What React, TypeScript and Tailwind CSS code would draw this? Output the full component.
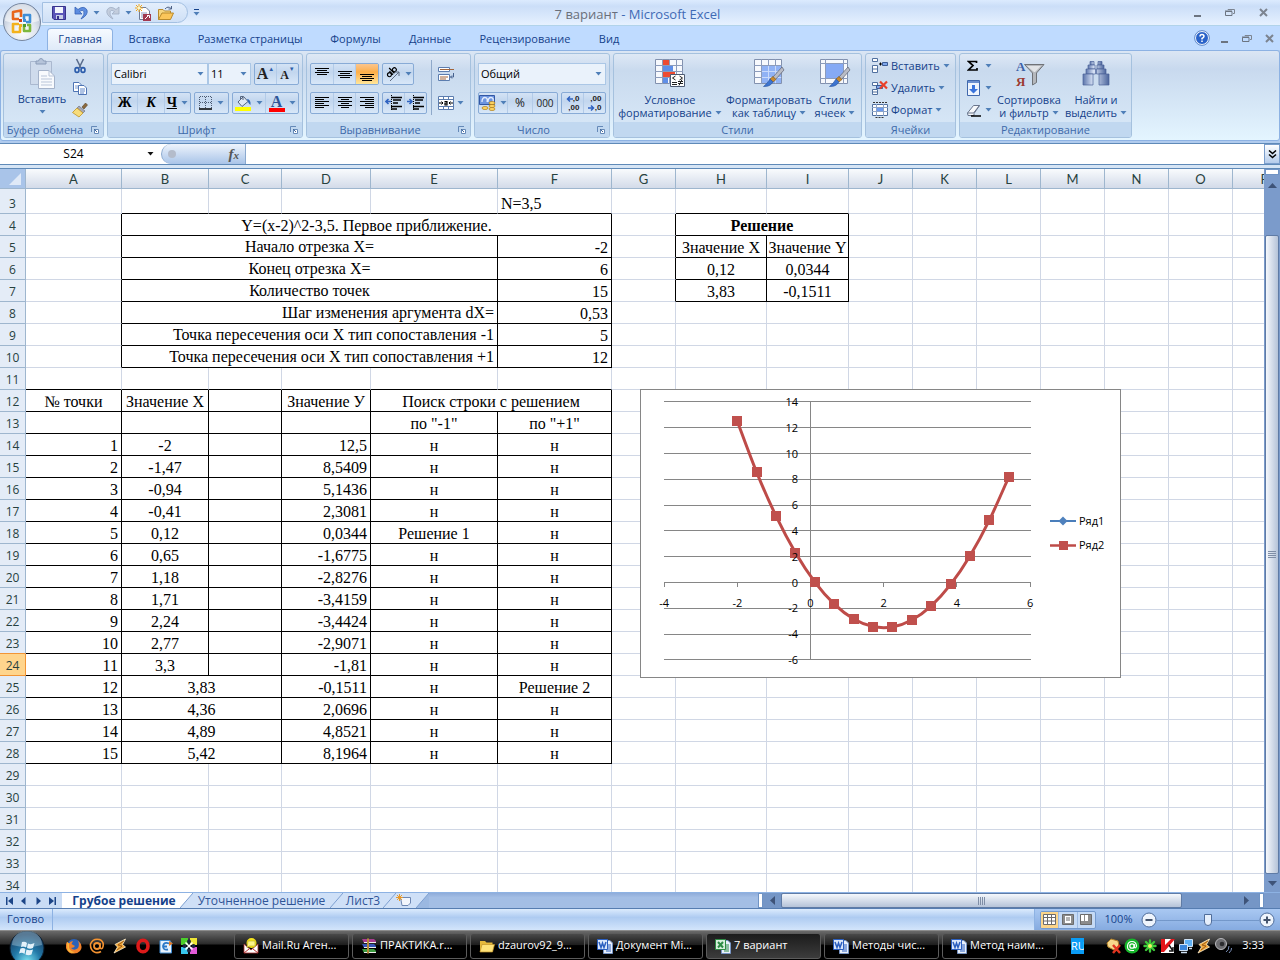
import { ReactNode } from 'react';
import clsx from 'clsx';

const COLUMNS = [
  { name: 'A', width: 96 },
  { name: 'B', width: 87 },
  { name: 'C', width: 73 },
  { name: 'D', width: 89 },
  { name: 'E', width: 127 },
  { name: 'F', width: 114 },
  { name: 'G', width: 64 },
  { name: 'H', width: 91 },
  { name: 'I', width: 82 },
  { name: 'J', width: 64 },
  { name: 'K', width: 64 },
  { name: 'L', width: 64 },
  { name: 'M', width: 64 },
  { name: 'N', width: 64 },
  { name: 'O', width: 64 },
  { name: 'P', width: 64 },
];
const FIRST_ROW = 3;
const LAST_ROW = 34;
const SELECTED_ROW = 24;

type Align = 'left' | 'center' | 'right';

interface ICell {
  text: string;
  align?: Align;
  span?: number;
  bold?: boolean;
  middle?: boolean;
}

const POINTS = [
  ['-2', '12,5'],
  ['-1,47', '8,5409'],
  ['-0,94', '5,1436'],
  ['-0,41', '2,3081'],
  ['0,12', '0,0344'],
  ['0,65', '-1,6775'],
  ['1,18', '-2,8276'],
  ['1,71', '-3,4159'],
  ['2,24', '-3,4424'],
  ['2,77', '-2,9071'],
  ['3,3', '-1,81'],
  ['3,83', '-0,1511'],
  ['4,36', '2,0696'],
  ['4,89', '4,8521'],
  ['5,42', '8,1964'],
];

function buildCells() {
  const cells: Record<string, ICell> = {
    F3: { text: 'N=3,5', align: 'left' },
    B4: { text: 'Y=(x-2)^2-3,5. Первое приближение.', span: 5 },
    B5: { text: 'Начало отрезка X=', span: 4, middle: true },
    B6: { text: 'Конец отрезка X=', span: 4, middle: true },
    B7: { text: 'Количество точек', span: 4, middle: true },
    B8: { text: 'Шаг изменения аргумента dX=', span: 4, align: 'right', middle: true },
    B9: { text: 'Точка пересечения оси X тип сопоставления -1', span: 4, align: 'right', middle: true },
    B10: { text: 'Точка пересечения оси X тип сопоставления +1', span: 4, align: 'right', middle: true },
    F5: { text: '-2', align: 'right' },
    F6: { text: '6', align: 'right' },
    F7: { text: '15', align: 'right' },
    F8: { text: '0,53', align: 'right' },
    F9: { text: '5', align: 'right' },
    F10: { text: '12', align: 'right' },
    H4: { text: 'Решение', span: 2, bold: true },
    H5: { text: 'Значение X' },
    I5: { text: 'Значение Y' },
    H6: { text: '0,12' },
    I6: { text: '0,0344' },
    H7: { text: '3,83' },
    I7: { text: '-0,1511' },
    A12: { text: '№ точки' },
    B12: { text: 'Значение X' },
    D12: { text: 'Значение У' },
    E12: { text: 'Поиск строки с решением', span: 2 },
    E13: { text: 'по "-1"' },
    F13: { text: 'по "+1"' },
  };
  POINTS.forEach(([x, y], i) => {
    const row = 14 + i;
    cells[`A${row}`] = { text: String(i + 1), align: 'right' };
    cells[`B${row}`] = { text: x, span: row >= 25 ? 2 : 1 };
    cells[`D${row}`] = { text: y, align: 'right' };
    cells[`E${row}`] = { text: row === 18 ? 'Решение 1' : 'н' };
    cells[`F${row}`] = { text: row === 25 ? 'Решение 2' : 'н' };
  });
  return cells;
}

const CELLS = buildCells();

// is the cell inside one of the framed tables
function isFramed(col: number, row: number) {
  if (row >= 4 && row <= 10 && col >= 1 && col <= 5) return true;
  if (row >= 4 && row <= 7 && (col === 7 || col === 8)) return true;
  return row >= 12 && row <= 28 && col >= 0 && col <= 5;
}

function Caret({ dark = false }: { dark?: boolean }) {
  return (
    <svg width="7" height="4" viewBox="0 0 7 4" className="shrink-0" aria-hidden="true">
      <path d="M0.5 0H6.5L3.5 3.5Z" fill={dark ? '#111' : '#4f7fb8'} />
    </svg>
  );
}

interface IIconProps {
  w?: number;
  h?: number;
  vw?: number;
  vh?: number;
  children: ReactNode;
}

function Icon({ w = 16, h = 16, vw = w, vh = h, children }: IIconProps) {
  return (
    <svg width={w} height={h} viewBox={`0 0 ${vw} ${vh}`} className="shrink-0" fill="none" aria-hidden="true">
      {children}
    </svg>
  );
}

function IconOffice() {
  return (
    <svg width="40" height="40" viewBox="0 0 40 40" aria-hidden="true">
      <defs>
        <radialGradient id="orb" cx="0.5" cy="0.75" r="0.75">
          <stop offset="0" stopColor="#ffffff" />
          <stop offset="0.5" stopColor="#dfe5ee" />
          <stop offset="1" stopColor="#a4b1c6" />
        </radialGradient>
      </defs>
      <circle cx="20" cy="20" r="18.5" fill="url(#orb)" stroke="#76869f" />
      <path d="M3 19A17 17 0 0 1 37 19Q20 24 3 19Z" fill="#fff" opacity="0.55" />
      <g strokeWidth="2.6" fill="none" strokeLinejoin="round">
        <path d="M17 17H11V10L19 8.500V15" stroke="#e8641b" />
        <path d="M22 17V13H28V20H24" stroke="#3f8fd8" />
        <path d="M17 22H11V30H18V25" stroke="#f3b21c" />
        <path d="M22 22V29H28V23H25" stroke="#7db83c" />
      </g>
      <path d="M17 17H20V20H17Z" fill="#c8411b" />
      <path d="M21 17H24V20H21Z" fill="#3f8fd8" />
      <path d="M17 22H20V25H17Z" fill="#f3b21c" />
      <path d="M21 22H24V25H21Z" fill="#4d9a2b" />
    </svg>
  );
}

function IconSave() {
  return (
    <Icon>
      <path d="M1.500 1.500H14.500V14.500H3L1.500 13Z" fill="#5a55b8" stroke="#37338c" />
      <path d="M4 2H12V8H4Z" fill="#f2f5fc" />
      <path d="M5 10H12V14H5Z" fill="#c8cfe6" />
      <path d="M6 11H8V14H6Z" fill="#37338c" />
    </Icon>
  );
}

function IconUndo({ muted = false }: { muted?: boolean }) {
  const path = 'M2 2V9H9L6.500 6.500Q9.500 4 11 6.500Q12 9.500 8 14Q15.500 10 14 5Q11 0 5 4.500Z';
  return (
    <Icon>
      <path
        d={path}
        transform={muted ? 'translate(16 0) scale(-1 1)' : undefined}
        fill={muted ? '#c3cddd' : '#5d8de0'}
        stroke={muted ? '#9fadc4' : '#3561b5'}
        strokeWidth="0.8"
      />
    </Icon>
  );
}

function IconNewForm() {
  return (
    <Icon w={18} h={18}>
      <path d="M4.500 3.500H11L14.500 7V15.500H4.500Z" fill="#fff" stroke="#6f7c96" />
      <path d="M6 9H12M6 11H10M6 13H9" stroke="#8b9cc0" />
      <path d="M8 10H16V17H8Z" fill="#a23a50" />
      <path d="M10 15L13 12M12 11.500H14.500V14" stroke="#fff" />
      <path d="M4 0V8M0 4H8M1 1L7 7M7 1L1 7" stroke="#f2a71b" />
      <circle cx="4" cy="4" r="1.500" fill="#fff7c0" />
    </Icon>
  );
}

function IconFolderOpen() {
  return (
    <Icon w={18} h={16}>
      <path d="M1.500 14.500V4.500H6L7.500 6H13.500V8" fill="#f6d680" stroke="#b98a2c" />
      <path d="M1.500 14.500L5 8H16.500L13.500 14.500Z" fill="#fbc65a" stroke="#b98a2c" />
      <path d="M8 4Q11 0.500 14 3.500M14.500 1V4H11.500" stroke="#4d6185" />
    </Icon>
  );
}

function IconPaste() {
  return (
    <Icon w={28} h={32}>
      <path d="M2.500 3.500H23.500V26.500H2.500Z" fill="#cfdbec" stroke="#aab8cf" />
      <path d="M8 5V3H10.500Q11 0.500 13 0.500T15.500 3H18V6H8Z" fill="#b6c4da" stroke="#8b9cb8" />
      <path d="M10.500 12.500H21L26.500 18V30.500H10.500Z" fill="#f8fafd" stroke="#a5b3ca" />
      <path d="M21 12.500V18H26.500M13 18H19M13 21H24M13 24H24M13 27H24" stroke="#b9c5d9" />
    </Icon>
  );
}

function IconCut() {
  return (
    <Icon>
      <path d="M4.500 1L9 10M11.500 1L7 10" stroke="#5d6f8e" strokeWidth="1.600" />
      <ellipse cx="5" cy="12" rx="2" ry="2.400" stroke="#2c5cab" strokeWidth="1.600" />
      <ellipse cx="11" cy="12" rx="2" ry="2.400" stroke="#2c5cab" strokeWidth="1.600" />
    </Icon>
  );
}

function IconCopy() {
  return (
    <Icon>
      <path d="M1.500 2.500H7L9.500 5V11.500H1.500Z" fill="#fff" stroke="#4e74b4" />
      <path d="M3 6H7M3 8H7" stroke="#7d9cd0" />
      <path d="M6.500 5.500H12L14.500 8V14.500H6.500Z" fill="#fff" stroke="#4e74b4" />
      <path d="M8 9H13M8 11H13M8 13H12" stroke="#5e86c8" />
    </Icon>
  );
}

function IconBrush() {
  return (
    <Icon>
      <path d="M10 5L13.500 1L15.500 3L12 7Z" fill="#8b6a3e" stroke="#5c4526" strokeWidth="0.600" />
      <path d="M7 4L13 9L11 11L5 6Z" fill="#a7a9b5" stroke="#65687a" strokeWidth="0.600" />
      <path d="M5 6L11 11L7 15L0.500 10.500Z" fill="#f7dc7b" stroke="#c09325" strokeWidth="0.800" />
    </Icon>
  );
}

function IconBorders() {
  return (
    <Icon w={14} h={14}>
      <path d="M1 0.500H13M1 6.500H13M0.500 1V12M6.500 1V12M12.500 1V12" stroke="#4a5a72" strokeDasharray="1 1" />
      <path d="M0 13H13" stroke="#000" strokeWidth="1.500" />
    </Icon>
  );
}

function IconFill() {
  return (
    <Icon w={17} h={17}>
      <path d="M3 7L8.500 1.500L13 6.500L7 11.500Z" fill="#dfe8f4" stroke="#55657f" />
      <path d="M5.500 4V1.500H8V5" stroke="#55657f" />
      <path d="M12 4Q16 4.500 15.500 10Q14 9 13 7Z" fill="#3168b8" />
      <path d="M0 12H16V16H0Z" fill="#ffff00" />
    </Icon>
  );
}

function IconLines({ widths, top = 0, rightAlign = false }: { widths: number[]; top?: number; rightAlign?: boolean }) {
  return (
    <Icon w={14} h={16}>
      {widths.map((w, i) => {
        const x = rightAlign ? 14 - w : w < 14 && widths.length > 4 ? 0 : (14 - w) / 2;
        return <rect key={i} x={x} y={top + i * 2} width={w} height="1" fill="#000" />;
      })}
    </Icon>
  );
}

function IconAlignCenter() {
  return (
    <Icon w={14} h={16}>
      <path d="M0 2.500H14M3 4.500H11M0 6.500H14M3 8.500H11M0 10.500H14M3 12.500H11" stroke="#000" />
    </Icon>
  );
}

function IconOrientation() {
  return (
    <Icon w={16} h={16}>
      <g transform="rotate(-45 8 8)" stroke="#000" strokeWidth="1.200">
        <circle cx="5" cy="6" r="2" />
        <path d="M7.500 3.500V8.500M9.500 1V8.500" />
        <circle cx="12" cy="6" r="2" />
      </g>
      <path d="M5 15L14 6M14 10V6H10" stroke="#5d6a80" />
    </Icon>
  );
}

function IconIndent({ right = false }: { right?: boolean }) {
  return (
    <Icon w={17} h={16}>
      <path d="M6 2.500H17M8 5H16M8 8H13M6 11.500H17M6 14H12" stroke="#000" strokeWidth="1.400" />
      <path d="M6.500 0V16" stroke="#000" strokeDasharray="1 1" />
      {right ? (
        <path d="M0 6.500H5M2.500 4L5 6.500L2.500 9" stroke="#2f62c0" strokeWidth="1.600" />
      ) : (
        <path d="M0.500 6.500H6M3.500 4L1 6.500L3.500 9" stroke="#2f62c0" strokeWidth="1.600" />
      )}
    </Icon>
  );
}

function IconWrap() {
  return (
    <Icon w={17} h={16}>
      <path d="M0.500 1.500H11.500V5.500H0.500ZM0.500 8.500H11.500V14.500H0.500Z" fill="#fff" stroke="#5c7daf" />
      <path d="M2 3.500H16M2 11H10M2 13H8" stroke="#a2643a" />
      <path d="M15.500 7V11H12.500M14 9.500L12.500 11L14 12.500" stroke="#46618e" />
    </Icon>
  );
}

function IconMerge() {
  return (
    <Icon>
      <path d="M0.500 1.500H15.500V14.500H0.500Z" fill="#fff" stroke="#5c7daf" />
      <path d="M0.500 4.500H15.500M0.500 11.500H15.500M5.500 1.500V4M10.500 1.500V4M5.500 12V14.500M10.500 12V14.500" stroke="#5c7daf" />
      <path d="M1 8H5M3.500 6.500L5 8L3.500 9.500M15 8H11M12.500 6.500L11 8L12.500 9.500" stroke="#000" />
      <path d="M6.500 6.500H9V10H7V8H9" stroke="#000" strokeWidth="1.200" />
    </Icon>
  );
}

function IconCurrency() {
  return (
    <Icon w={17} h={16}>
      <path d="M0.500 0.500H15.500V9.500H0.500Z" fill="#6d95e0" stroke="#3358a5" />
      <path d="M3 7Q3 2.500 6 2.500T8 7M9 7Q9 2.500 12 2.500T14 7" stroke="#e3ecfc" strokeWidth="1.300" />
      <ellipse cx="13" cy="8" rx="3" ry="1.500" fill="#ffd766" stroke="#ae7a12" strokeWidth="0.700" />
      <ellipse cx="13" cy="11" rx="3" ry="1.500" fill="#ffd766" stroke="#ae7a12" strokeWidth="0.700" />
      <ellipse cx="13" cy="14" rx="3" ry="1.500" fill="#ffd766" stroke="#ae7a12" strokeWidth="0.700" />
      <ellipse cx="6" cy="13" rx="3" ry="1.500" fill="#ffd766" stroke="#ae7a12" strokeWidth="0.700" />
    </Icon>
  );
}

function IconArrow({ right = false }: { right?: boolean }) {
  return (
    <Icon w={7} h={6}>
      {right ? (
        <path d="M0 3H5M3 0.500L5.500 3L3 5.500" stroke="#2f62c0" strokeWidth="1.500" />
      ) : (
        <path d="M7 3H2M4 0.500L1.500 3L4 5.500" stroke="#2f62c0" strokeWidth="1.500" />
      )}
    </Icon>
  );
}

function TableGrid() {
  return (
    <>
      <path d="M0.500 0.500H27.500V24.500H0.500Z" fill="#f7f9fd" stroke="#8291ae" />
      <path d="M0 6.500H28M0 12.500H28M0 18.500H28M7.500 0V25M14.500 0V25M21.500 0V25" stroke="#8c9cbc" />
    </>
  );
}

function PaintBrush() {
  return (
    <>
      <path d="M28 8L19 18L21.500 20.500L30 11Z" fill="#b9bcc6" stroke="#5c6070" strokeWidth="0.700" />
      <path d="M19 17.500L22 20.500L19 23L16 20Z" fill="#c88a2f" stroke="#7c5419" strokeWidth="0.600" />
      <path d="M16 20L19 23Q16 28 9.500 27.500Q13 25 16 20Z" fill="#3d74cf" stroke="#2a54a0" strokeWidth="0.600" />
    </>
  );
}

function IconConditional() {
  return (
    <Icon w={31} h={29}>
      <TableGrid />
      <path d="M8 1H14V6H8ZM8 13H20V18H8Z" fill="#ee4b32" />
      <path d="M8 7H18V12H8ZM8 19H13V24H8Z" fill="#5f8fe8" />
      <path d="M15.500 15.500H29.500V27.500H15.500Z" fill="#fff" stroke="#4d5a72" />
      <path d="M20.500 17L17.500 19L20.500 21M17 23.500H22M17 25.500H22M24.500 17L27.500 19L24.500 21M23 22.500H28M23 24.500H28M27 20.500L24 26.500" stroke="#222" />
    </Icon>
  );
}

function IconFormatTable() {
  return (
    <Icon w={31} h={29}>
      <TableGrid />
      <path d="M8 7H27V24H8Z" fill="#7ea6f3" opacity="0.850" />
      <path d="M8 12.500H27M8 18.500H27M14.500 7V24M21.500 7V24" stroke="#c9dafb" />
      <PaintBrush />
    </Icon>
  );
}

function IconCellStyles() {
  return (
    <Icon w={31} h={29}>
      <path d="M0.500 0.500H27.500V24.500H0.500Z" fill="#f7f9fd" stroke="#8291ae" />
      <path d="M0 4.500H28M0 19.500H28M5.500 0V25M23.500 0V25" stroke="#8c9cbc" />
      <path d="M6 5H23V19H6Z" fill="#86aaf5" />
      <PaintBrush />
    </Icon>
  );
}

function IconInsertCells() {
  return (
    <Icon>
      <path d="M0.500 0.500H5.500V3.500H0.500ZM0.500 7.500H5.500V14.500H0.500ZM0.500 11H5.500" fill="#fff" stroke="#51709f" />
      <path d="M7 6H10M8.500 4.500V7.500" stroke="#000" />
      <path d="M10.500 4.500H15.500V7.500H10.500Z" fill="#7fa6ea" stroke="#3a5b95" />
    </Icon>
  );
}

function IconDeleteCells() {
  return (
    <Icon>
      <path d="M0.500 2.500H5.500V5.500H0.500ZM0.500 9.500H5.500V14.500H0.500ZM0.500 12H5.500" fill="#fff" stroke="#51709f" />
      <path d="M4.500 5.500H10.500V8.500H4.500Z" fill="#7fa6ea" stroke="#3a5b95" />
      <path d="M8 1.500L15 8.500M15 1.500L8 8.500" stroke="#e9402a" strokeWidth="2.200" />
    </Icon>
  );
}

function IconFormatCells() {
  return (
    <Icon>
      <path d="M0.500 2.500H15.500V13.500H0.500Z" fill="#fff" stroke="#51709f" />
      <path d="M0 5.500H16M0 9.500H16M4.500 2V14M11.500 2V14" stroke="#8ba3c8" />
      <path d="M5 6H11V9H5Z" fill="#6c9bf0" />
      <path d="M1 0.500H15M3.500 15.500H12" stroke="#333" strokeDasharray="2 1" />
    </Icon>
  );
}

function IconSigma() {
  return (
    <Icon w={12} h={12}>
      <path d="M9.500 3V1.500H1.500L6 5.500L1.500 10H10V8" stroke="#000" strokeWidth="1.700" />
    </Icon>
  );
}

function IconFillDown() {
  return (
    <Icon w={13} h={16}>
      <path d="M0.500 0.500H12.500V15.500H0.500Z" fill="#eef4fd" stroke="#4068ac" />
      <path d="M1 1H12V3H1Z" fill="#6b8fcf" />
      <path d="M5 5H8V9H11L6.500 13.500L2 9H5Z" fill="#3a74dc" />
    </Icon>
  );
}

function IconEraser() {
  return (
    <Icon w={14} h={13}>
      <path d="M0.500 9L6.500 1.500H12.500L7 9.500V11.500H1Z" fill="#f6f8fb" stroke="#69758c" />
      <path d="M0.500 9H6.500L12.500 1.500" stroke="#69758c" />
      <path d="M4 12H14" stroke="#000" strokeWidth="1.300" />
    </Icon>
  );
}

function IconSort() {
  return (
    <Icon w={31} h={32}>
      <path d="M10.500 5.500H30L22.500 14V23.500L18.500 26V14Z" fill="#b5b8bd" stroke="#6f7277" />
      <path d="M13 7H27L21 13H20Z" fill="#e2e4e7" />
      <text x="2" y="12" fontSize="13" fontWeight="700" fontFamily="Liberation Serif, serif" fill="#3d62a8">А</text>
      <text x="2" y="27" fontSize="13" fontWeight="700" fontFamily="Liberation Serif, serif" fill="#9c3a31">Я</text>
    </Icon>
  );
}

function IconBinoculars() {
  return (
    <Icon w={28} h={28}>
      <defs>
        <linearGradient id="tube" x1="0" x2="1" y1="0" y2="0">
          <stop offset="0" stopColor="#5c75ab" />
          <stop offset="0.4" stopColor="#dde7f9" />
          <stop offset="1" stopColor="#4c659c" />
        </linearGradient>
      </defs>
      <g stroke="#4b629a" strokeWidth="0.700">
        <path d="M8 2.500H12V6H8ZM16 2.500H20V6H16Z" fill="url(#tube)" />
        <path d="M6 6H13V10H6ZM15 6H22V10H15Z" fill="url(#tube)" />
        <path d="M4 10H13.500V15H4ZM14.500 10H24V15H14.500Z" fill="url(#tube)" />
        <path d="M1 15H11V26H1ZM17 15H27V26H17Z" fill="url(#tube)" />
      </g>
    </Icon>
  );
}

function IconLauncher() {
  return (
    <Icon w={8} h={8}>
      <path d="M0.500 6V0.500H6" stroke="#6589b8" />
      <path d="M3.500 3.500H7.500V7.500H3.500Z" fill="#fff" stroke="#6589b8" />
      <path d="M3 3L6 6" stroke="#44699c" />
    </Icon>
  );
}

function WindowButtons({ className }: { className?: string }) {
  return (
    <div className={clsx('flex items-center justify-between', className)}>
      <button aria-label="Свернуть" className="flex w-4 justify-center">
        <Icon w={9} h={9}>
          <path d="M1 8H8" stroke="#6c7480" strokeWidth="2" />
        </Icon>
      </button>
      <button aria-label="Восстановить" className="flex w-4 justify-center">
        <Icon w={10} h={9}>
          <path d="M3 2V1.500H9.500V5.500H8" stroke="#7c8490" />
          <path d="M0.500 3.500H7V7.500H0.500ZM0 3H7" stroke="#6c7480" />
        </Icon>
      </button>
      <button aria-label="Закрыть" className="flex w-4 justify-center">
        <Icon w={9} h={9}>
          <path d="M1 1L8 8M8 1L1 8" stroke="#7c8490" strokeWidth="2" />
        </Icon>
      </button>
    </div>
  );
}

function TitleBar() {
  return (
    <header className="relative flex h-[26px] items-center border-b border-[#b1d3ea] bg-linear-to-b from-[#dcebfe] via-[#cbdef8] via-25% to-[#e6f1ff]">
      <div className="ml-[42px] flex h-[21px] w-[146px] items-center rounded-r-full border border-[#a3c0e2] bg-linear-to-b from-[#e3eefc] to-[#cfe0f6] pl-2 text-[#15428b]">
        <button aria-label="Сохранить"><IconSave /></button>
        <button aria-label="Отменить" className="ml-1.5 flex w-[30px] items-center gap-1">
          <IconUndo />
          <Caret />
        </button>
        <button aria-label="Вернуть" className="ml-0.5 flex w-[30px] items-center gap-1">
          <IconUndo muted />
          <Caret />
        </button>
        <button aria-label="Форма"><IconNewForm /></button>
        <button aria-label="Открыть" className="ml-1"><IconFolderOpen /></button>
      </div>
      <button aria-label="Настройка панели быстрого доступа" className="flex h-4 w-4 flex-col items-center justify-center gap-0.5">
        <span className="h-px w-[5px] bg-[#15428b]" />
        <Caret />
      </button>
      <h1 className="flex-1 pr-[118px] pt-1 text-center text-[13px] text-[#3f6ab5]">
        <span className="text-[#696f7a]">7 вариант</span> - Microsoft Excel
      </h1>
      <WindowButtons className="mr-[9px] w-[82px]" />
      <button aria-label="Кнопка Office" className="absolute left-0.5 top-0.5 z-10">
        <IconOffice />
      </button>
    </header>
  );
}

const TABS = [
  { name: 'Вставка', width: 'w-[69px]' },
  { name: 'Разметка страницы', width: 'w-[132px]' },
  { name: 'Формулы', width: 'w-[79px]' },
  { name: 'Данные', width: 'w-[70px]' },
  { name: 'Рецензирование', width: 'w-[120px]' },
  { name: 'Вид', width: 'w-[48px]' },
];

function TabRow() {
  return (
    <nav className="flex h-[24px] items-end bg-[#bfdbff] pl-[47px] text-[11px] text-[#15428b]">
      <button className="mr-0.5 h-[22px] w-[66px] rounded-t border border-b-0 border-[#8db2e3] bg-linear-to-b from-[#f6faff] to-[#dfeaf8]">
        Главная
      </button>
      {TABS.map((tab) => (
        <button key={tab.name} className={clsx('h-[22px] whitespace-nowrap', tab.width)}>
          {tab.name}
        </button>
      ))}
      <div className="ml-auto mr-[3px] flex h-full items-center gap-1.5">
        <button aria-label="Справка">
          <Icon>
            <circle cx="8" cy="8" r="6.500" fill="#2a63c9" stroke="#fff" />
            <circle cx="8" cy="8" r="7.400" stroke="#4b76bb" strokeWidth="0.800" />
            <path d="M6 6.500Q6 4.500 8 4.500T10 6.300Q10 7.500 8 8.500V9.500M8 10.500V12" stroke="#fff" strokeWidth="1.500" />
          </Icon>
        </button>
        <WindowButtons className="w-[61px]" />
      </div>
    </nav>
  );
}

interface IGroupProps {
  title: string;
  width: string;
  launcher?: boolean;
  children: ReactNode;
}

function Group({ title, width, launcher = false, children }: IGroupProps) {
  return (
    <section
      className={clsx(
        'flex h-[85px] shrink-0 flex-col overflow-hidden rounded-[3px] border border-[#a5c1de] bg-linear-to-b from-[#dee8f5] via-[#c9daee] via-20% to-[#d9e9f8]',
        width
      )}
    >
      <div className="flex min-h-0 flex-1">{children}</div>
      <footer className="flex h-[15px] items-center bg-[#c1d8f0] text-[11px] text-[#3e6aaa]">
        <h2 className={clsx('flex-1 whitespace-nowrap text-center leading-[15px]', launcher && 'pr-[5px]')}>{title}</h2>
        {launcher && (
          <button aria-label={`Параметры: ${title}`} className="mr-1">
            <IconLauncher />
          </button>
        )}
      </footer>
    </section>
  );
}

function ButtonBox({ width, children }: { width: string; children: ReactNode }) {
  return (
    <div
      className={clsx(
        'flex h-[22px] items-stretch divide-x divide-[#b3cbe8] overflow-hidden rounded-[2px] border border-[#88abd6] bg-linear-to-b from-[#d4e3f5] via-[#c2d6ee] via-40% to-[#d8e7f8]',
        width
      )}
    >
      {children}
    </div>
  );
}

function ToolButton({ label, active = false, drop = false, children }: { label: string; active?: boolean; drop?: boolean; children: ReactNode }) {
  return (
    <button
      aria-label={label}
      className={clsx(
        'flex flex-1 items-center justify-center gap-1',
        active && 'bg-linear-to-b from-[#fbc58c] via-[#fdae46] via-40% to-[#ffe699]'
      )}
    >
      {children}
      {drop && <Caret />}
    </button>
  );
}

function Combo({ label, value, width }: { label: string; value: string; width: string }) {
  return (
    <div className={clsx('relative flex h-[22px] items-center border border-[#abc7e6] bg-[#eaf2fb]', width)}>
      <select aria-label={label} className="h-full w-full appearance-none bg-transparent pl-[2px] text-[11px] text-black outline-none">
        <option>{value}</option>
      </select>
      <span className="pointer-events-none absolute right-[3px]">
        <Caret />
      </span>
    </div>
  );
}

function BigButton({ icon, lines, width }: { icon: ReactNode; lines: [string, string]; width: string }) {
  return (
    <button className={clsx('flex flex-col items-center pt-[5px] text-[11px] leading-[13px] text-[#15428b]', width)}>
      <span className="h-[34px]">{icon}</span>
      <span className="whitespace-nowrap">{lines[0]}</span>
      <span className="flex items-center gap-[3px] whitespace-nowrap">
        {lines[1]}
        <Caret />
      </span>
    </button>
  );
}

function SmallButton({ icon, text }: { icon: ReactNode; text: string }) {
  return (
    <button className="flex h-[22px] items-center gap-[3px] text-[11px] text-[#15428b]">
      {icon}
      <span>{text}</span>
      <Caret />
    </button>
  );
}

function Ribbon() {
  return (
    <div className="flex h-[91px] gap-[3px] overflow-hidden rounded-[3px] border border-[#8db2e3] bg-linear-to-b from-[#dbe6f4] via-[#c8d9ee] via-20% to-[#e4f5ff] pl-0.5 pt-0.5">
      <Group title="Буфер обмена" width="w-[101px]" launcher>
        <button className="flex w-[76px] flex-col items-center pt-1 text-[11px] leading-[14px] text-[#15428b]">
          <IconPaste />
          <span className="pb-1 pt-0.5">Вставить</span>
          <Caret />
        </button>
        <div className="flex flex-col gap-1.5 pt-1">
          <button aria-label="Вырезать" className="-ml-2"><IconCut /></button>
          <button aria-label="Копировать" className="-ml-2"><IconCopy /></button>
          <button aria-label="Формат по образцу" className="-ml-2"><IconBrush /></button>
        </div>
      </Group>

      <Group title="Шрифт" width="w-[196px]" launcher>
        <div className="flex flex-col gap-[7px] pl-[3px] pt-[9px]">
          <div className="flex">
            <Combo label="Шрифт" value="Calibri" width="w-[97px]" />
            <Combo label="Размер шрифта" value="11" width="w-[43px]" />
            <div className="pl-[3px]">
              <ButtonBox width="w-[45px]">
                <ToolButton label="Увеличить размер шрифта">
                  <span className="font-['Liberation_Serif',serif] text-base font-bold text-[#222]">A</span>
                  <span className="-ml-1 self-start text-[6px] leading-[10px] text-[#2f5ea8]">▲</span>
                </ToolButton>
                <ToolButton label="Уменьшить размер шрифта">
                  <span className="pt-0.5 font-['Liberation_Serif',serif] text-xs font-bold text-[#222]">A</span>
                  <span className="-ml-1 self-start text-[6px] leading-[10px] text-[#2f5ea8]">▼</span>
                </ToolButton>
              </ButtonBox>
            </div>
          </div>
          <div className="flex gap-[3px] font-['Liberation_Serif',serif] text-sm font-bold text-black">
            <ButtonBox width="w-[80px]">
              <ToolButton label="Полужирный">Ж</ToolButton>
              <ToolButton label="Курсив"><i>К</i></ToolButton>
              <ToolButton label="Подчеркнутый" drop><span className="underline">Ч</span></ToolButton>
            </ButtonBox>
            <ButtonBox width="w-[35px]">
              <ToolButton label="Границы" drop><IconBorders /></ToolButton>
            </ButtonBox>
            <ButtonBox width="w-[67px]">
              <ToolButton label="Цвет заливки" drop><IconFill /></ToolButton>
              <ToolButton label="Цвет текста" drop>
                <span className="h-[17px] w-4 border-b-4 border-[#ff0000] text-center text-base leading-[14px] text-[#2f5597]">A</span>
              </ToolButton>
            </ButtonBox>
          </div>
        </div>
      </Group>

      <Group title="Выравнивание" width="w-[165px]" launcher>
        <div className="flex flex-col gap-[7px] pl-[3px] pt-[9px]">
          <div className="flex gap-[3px]">
            <ButtonBox width="w-[69px]">
              <ToolButton label="По верхнему краю"><IconLines widths={[14, 10, 14, 10]} top={2} /></ToolButton>
              <ToolButton label="По середине"><IconLines widths={[14, 10, 14, 10]} top={5} /></ToolButton>
              <ToolButton label="По нижнему краю" active><IconLines widths={[14, 10, 14, 10]} top={8} /></ToolButton>
            </ButtonBox>
            <ButtonBox width="w-[32px]">
              <ToolButton label="Ориентация" drop><IconOrientation /></ToolButton>
            </ButtonBox>
          </div>
          <div className="flex gap-[3px]">
            <ButtonBox width="w-[69px]">
              <ToolButton label="По левому краю"><IconLines widths={[14, 9, 14, 9, 14, 9]} top={2} /></ToolButton>
              <ToolButton label="По центру"><IconAlignCenter /></ToolButton>
              <ToolButton label="По правому краю"><IconLines widths={[14, 9, 14, 9, 14, 9]} top={2} rightAlign /></ToolButton>
            </ButtonBox>
            <ButtonBox width="w-[45px]">
              <ToolButton label="Уменьшить отступ"><IconIndent /></ToolButton>
              <ToolButton label="Увеличить отступ"><IconIndent right /></ToolButton>
            </ButtonBox>
          </div>
        </div>
        <div className="ml-1 mt-1.5 h-[55px] border-l border-[#8fa9ca]" />
        <div className="flex flex-col gap-[13px] pl-1.5 pt-3">
          <button aria-label="Перенос текста"><IconWrap /></button>
          <button aria-label="Объединить" className="flex items-center gap-[3px]">
            <IconMerge />
            <Caret />
          </button>
        </div>
      </Group>

      <Group title="Число" width="w-[136px]" launcher>
        <div className="flex flex-col gap-[7px] pl-[3px] pt-[9px]">
          <Combo label="Числовой формат" value="Общий" width="w-[128px]" />
          <div className="flex gap-[3px] text-[#222]">
            <ButtonBox width="w-[80px]">
              <ToolButton label="Финансовый формат" drop><IconCurrency /></ToolButton>
              <ToolButton label="Процентный формат"><span className="text-xs">%</span></ToolButton>
              <ToolButton label="Формат с разделителями"><span className="text-[10px]">000</span></ToolButton>
            </ButtonBox>
            <ButtonBox width="w-[45px]">
              <ToolButton label="Увеличить разрядность">
                <span className="flex flex-col items-end font-['Liberation_Sans',sans-serif] text-[8px] font-bold leading-[9px]">
                  <span className="flex items-center"><IconArrow />,0</span>
                  <span>,00</span>
                </span>
              </ToolButton>
              <ToolButton label="Уменьшить разрядность">
                <span className="flex flex-col items-end font-['Liberation_Sans',sans-serif] text-[8px] font-bold leading-[9px]">
                  <span>,00</span>
                  <span className="flex items-center"><IconArrow right />,0</span>
                </span>
              </ToolButton>
            </ButtonBox>
          </div>
        </div>
      </Group>

      <Group title="Стили" width="w-[249px]">
        <div className="flex gap-0.5 pl-0.5">
          <BigButton icon={<IconConditional />} lines={['Условное', 'форматирование']} width="w-[108px]" />
          <BigButton icon={<IconFormatTable />} lines={['Форматировать', 'как таблицу']} width="w-[86px]" />
          <BigButton icon={<IconCellStyles />} lines={['Стили', 'ячеек']} width="w-[42px]" />
        </div>
      </Group>

      <Group title="Ячейки" width="w-[91px]">
        <div className="flex flex-col pl-1.5 pt-px">
          <SmallButton icon={<IconInsertCells />} text="Вставить" />
          <SmallButton icon={<IconDeleteCells />} text="Удалить" />
          <SmallButton icon={<IconFormatCells />} text="Формат" />
        </div>
      </Group>

      <Group title="Редактирование" width="w-[173px]">
        <div className="flex w-8 flex-col pl-[7px] pt-px">
          <button aria-label="Сумма" className="flex h-[22px] items-center justify-between"><IconSigma /><Caret /></button>
          <button aria-label="Заполнить" className="flex h-[22px] items-center justify-between"><IconFillDown /><Caret /></button>
          <button aria-label="Очистить" className="flex h-[22px] items-center justify-between"><IconEraser /><Caret /></button>
        </div>
        <BigButton icon={<IconSort />} lines={['Сортировка', 'и фильтр']} width="w-[74px]" />
        <BigButton icon={<IconBinoculars />} lines={['Найти и', 'выделить']} width="w-[60px]" />
      </Group>
    </div>
  );
}

function FormulaBar() {
  return (
    <div className="mt-0.5 flex h-[22px] border-y border-[#5f8ab8] bg-white">
      <div className="flex w-[161px] items-center">
        <input aria-label="Имя" defaultValue="S24" className="w-[147px] bg-transparent text-center text-xs text-black outline-none" />
        <Caret dark />
      </div>
      <div className="flex w-[85px] items-center justify-between rounded-l-full border-l border-r border-[#8aa9cf] bg-linear-to-b from-[#eef4fc] to-[#a9c4e8] px-1.5">
        <span className="h-2 w-2 rounded-full bg-[#b4bccb]" />
        <button aria-label="Вставить функцию" className="font-['Liberation_Serif',serif] text-[15px] font-bold italic text-[#555]">
          f<span className="text-[11px]">x</span>
        </button>
      </div>
      <input aria-label="Строка формул" className="min-w-0 flex-1 bg-transparent outline-none" />
      <button aria-label="Развернуть" className="flex w-4 items-center justify-center border border-[#7a9dcb] bg-linear-to-b from-white to-[#b4cceb]">
        <Icon w={9} h={9}>
          <path d="M1 0.500L4.500 3.500L8 0.500M1 4.500L4.500 7.500L8 4.500" stroke="#000" strokeWidth="1.500" />
        </Icon>
      </button>
    </div>
  );
}

function renderRow(row: number) {
  const out: ReactNode[] = [];
  for (let col = 0; col < COLUMNS.length; col++) {
    const start = col;
    const cell = CELLS[`${COLUMNS[col].name}${row}`];
    const span = cell?.span ?? 1;
    col += span - 1;
    const blackRight = isFramed(col, row) || isFramed(col + 1, row);
    const blackBottom = isFramed(start, row) || isFramed(start, row + 1);
    out.push(
      <td
        key={start}
        colSpan={span}
        className={clsx(
          'whitespace-nowrap border-b border-r p-0',
          blackRight ? 'border-r-black' : 'border-r-[#d0d7e5]',
          blackBottom ? 'border-b-black' : 'border-b-[#d0d7e5]',
          cell?.middle ? 'align-middle' : 'align-bottom',
          cell?.bold && 'font-bold',
          cell?.align === 'left' && 'pl-[3px] text-left',
          cell?.align === 'right' && 'pr-[3px] text-right',
          cell && !cell.align && 'text-center'
        )}
      >
        {cell?.text}
      </td>
    );
  }
  return out;
}

function Sheet() {
  const rows = Array.from({ length: LAST_ROW - FIRST_ROW + 1 }, (_, i) => FIRST_ROW + i);
  return (
    <table className="w-[1297px] table-fixed border-separate border-spacing-0 font-['Liberation_Serif',serif] text-base leading-[18px] text-black">
      <colgroup>
        <col className="w-[26px]" />
        {COLUMNS.map((c) => (
          <col key={c.name} style={{ width: c.width }} />
        ))}
      </colgroup>
      <thead>
        <tr className="h-5 font-['Lato','Open_Sans',sans-serif] text-[13px] text-[#27413e]">
          <th aria-label="Выделить все" className="border-b border-r border-[#9eb6ce] bg-[#a9c4e9] p-0">
            <svg width="12" height="12" viewBox="0 0 12 12" className="ml-auto mr-1" aria-hidden="true">
              <path d="M12 0V12H0Z" fill="#dfe9f7" />
            </svg>
          </th>
          {COLUMNS.map((c) => (
            <th key={c.name} className="border-b border-r border-[#9eb6ce] bg-linear-to-b from-[#f9fbfd] to-[#d3dbe9] p-0 font-normal">
              {c.name}
            </th>
          ))}
        </tr>
      </thead>
      <tbody>
        {rows.map((row) => (
          <tr key={row} className={row === FIRST_ROW ? 'h-[25px]' : 'h-[22px]'}>
            <th
              className={clsx(
                "border-b border-r p-0 align-bottom font-['Open_Sans',sans-serif] text-xs font-normal leading-[18px] text-[#27413e]",
                row === SELECTED_ROW ? 'border-[#f29536] bg-[#ffd58d]' : 'border-[#9eb6ce] bg-[#e4ecf7]',
                row === SELECTED_ROW - 1 && 'border-b-[#f29536]'
              )}
            >
              {row}
            </th>
            {renderRow(row)}
          </tr>
        ))}
      </tbody>
    </table>
  );
}

// plot coordinates for a value pair
const px = (x: number) => 170.5 + x * 36.6;
const py = (y: number) => 193.5 - y * 12.9;

function Chart() {
  const points = POINTS.map(([x, y]) => [px(Number(x.replace(',', '.'))), py(Number(y.replace(',', '.')))]);
  // Catmull-Rom through the points
  const curve = points.reduce((acc, p, i) => {
    if (i === 0) return `M${p[0]} ${p[1]}`;
    const p0 = points[i - 2] ?? points[i - 1];
    const p1 = points[i - 1];
    const p3 = points[i + 1] ?? p;
    return `${acc}C${p1[0] + (p[0] - p0[0]) / 6} ${p1[1] + (p[1] - p0[1]) / 6} ${p[0] - (p3[0] - p1[0]) / 6} ${
      p[1] - (p3[1] - p1[1]) / 6
    } ${p[0]} ${p[1]}`;
  }, '');
  const yTicks = [14, 12, 10, 8, 6, 4, 2, 0, -2, -4, -6];
  const xTicks = [-4, -2, 0, 2, 4, 6];
  return (
    <svg
      width="481"
      height="289"
      viewBox="0 0 481 289"
      className="absolute left-[640px] top-[220px] bg-white font-['Open_Sans',sans-serif] text-[11px]"
      role="img"
      aria-label="График функции"
    >
      <rect x="0.5" y="0.5" width="480" height="288" fill="none" stroke="#868686" />
      <g stroke="#868686" shapeRendering="crispEdges">
        {yTicks.map((t) => (
          <line key={t} x1={24} x2={391} y1={py(t)} y2={py(t)} />
        ))}
        <line x1={170.5} x2={170.5} y1={py(14)} y2={py(-6)} />
        {xTicks.map((t) => (
          <line key={t} x1={px(t)} x2={px(t)} y1={193} y2={198} />
        ))}
      </g>
      <path d={curve} fill="none" stroke="#be4b48" strokeWidth="3" />
      {points.map(([x, y], i) => (
        <rect key={i} x={Math.round(x) - 5} y={Math.round(y) - 5} width="10" height="10" fill="#c0504d" />
      ))}
      {yTicks.map((t) => (
        <text key={t} x="158" y={py(t) + 4} textAnchor="end">{t}</text>
      ))}
      {xTicks.map((t) => (
        <text key={t} x={px(t)} y="218" textAnchor="middle">{t}</text>
      ))}
      <path d="M410 132H436" stroke="#4a7ebb" strokeWidth="2" />
      <path d="M423 127.500L427.500 132L423 136.500L418.500 132Z" fill="#4f81bd" />
      <text x="439" y="136">Ряд1</text>
      <path d="M410 156.500H436" stroke="#be4b48" strokeWidth="2.500" />
      <rect x="419" y="152" width="9" height="9" fill="#c0504d" />
      <text x="439" y="160">Ряд2</text>
    </svg>
  );
}

function VerticalScroll() {
  return (
    <div className="flex w-4 flex-col items-center bg-[#7b9bcb]">
      <span className="h-1.5 w-3.5 border border-[#6f93c4] bg-white" />
      <button aria-label="Вверх" className="flex h-5 w-full items-center justify-center">
        <Icon w={9} h={5}><path d="M4.500 0L9 5H0Z" fill="#3e5378" /></Icon>
      </button>
      <div className="h-10" />
      <div className="flex w-3.5 flex-1 flex-col items-center justify-center gap-px rounded-[2px] border border-[#5f7ba5] bg-linear-to-r from-[#f5f8fc] to-[#b5c3d8]">
        {[0, 1, 2, 3].map((i) => (
          <span key={i} className="h-px w-2 bg-[#7f8ea6]" />
        ))}
      </div>
      <button aria-label="Вниз" className="flex h-[18px] w-full items-center justify-center">
        <Icon w={9} h={5}><path d="M0 0H9L4.500 5Z" fill="#3e5378" /></Icon>
      </button>
    </div>
  );
}

function Slash({ left, right }: { left: string; right: string }) {
  return (
    <svg width="13" height="15" viewBox="0 0 13 15" className="shrink-0" aria-hidden="true">
      <rect width="13" height="15" fill={right} />
      <path d="M0 0H13L0 15Z" fill={left} />
      <path d="M13 0L0 15" stroke="#7d9fd0" />
    </svg>
  );
}

function NavArrow({ label, d }: { label: string; d: string }) {
  return (
    <button aria-label={label} className="flex w-[14px] justify-center">
      <Icon w={7} h={8}><path d={d} fill="#1c4587" /></Icon>
    </button>
  );
}

function SheetTabs() {
  return (
    <div className="flex h-4 items-stretch border-t border-[#8db2e3] bg-linear-to-b from-[#8facda] to-[#a3bee5] to-30% text-xs leading-[15px] text-[#2f5597]">
      <div className="flex w-[62px] items-center justify-between bg-[#c9dcf5] px-0.5">
        <NavArrow label="Первый лист" d="M0 0H1.500V8H0ZM7 0V8L2 4Z" />
        <NavArrow label="Предыдущий лист" d="M5.500 0V8L1 4Z" />
        <NavArrow label="Следующий лист" d="M1.500 0V8L6 4Z" />
        <NavArrow label="Последний лист" d="M5.500 0H7V8H5.500ZM0 0V8L5 4Z" />
      </div>
      <button className="w-[118px] whitespace-nowrap bg-white pl-[6px] text-center font-bold text-[#15428b]">Грубое решение</button>
      <Slash left="#ffffff" right="#cfe0f7" />
      <button className="w-[137px] whitespace-nowrap bg-[#cfe0f7] text-center">Уточненное решение</button>
      <Slash left="#cfe0f7" right="#cfe0f7" />
      <button className="w-[40px] bg-[#cfe0f7] text-center">Лист3</button>
      <Slash left="#cfe0f7" right="#cfe0f7" />
      <button aria-label="Вставить лист" className="flex w-5 items-center bg-[#cfe0f7]">
        <Icon w={16} h={13}>
          <path d="M4.500 3.500H14.500V9L12 11.500H6Z" fill="#f2f6fc" stroke="#6d87b3" />
          <path d="M3.500 0V7M0 3.500H7M1 1L6 6M6 1L1 6" stroke="#e99a28" />
        </Icon>
      </button>
      <Slash left="#cfe0f7" right="#9bb8e1" />
      <div className="flex-1" />
      <div className="flex w-[506px] items-stretch bg-[#7596c6]">
        <span className="w-[5px] border border-[#6f93c4] bg-white" />
        <button aria-label="Влево" className="flex w-[18px] items-center justify-center">
          <Icon w={5} h={9}><path d="M5 0V9L0 4.500Z" fill="#3e5378" /></Icon>
        </button>
        <div className="flex w-[401px] items-center justify-center gap-px rounded-[2px] border border-[#5f7ba5] bg-linear-to-b from-[#f5f8fc] to-[#b5c3d8]">
          {[0, 1, 2, 3].map((i) => (
            <span key={i} className="h-2 w-px bg-[#7f8ea6]" />
          ))}
        </div>
        <button aria-label="Вправо" className="ml-auto mr-2 flex w-[10px] items-center justify-center">
          <Icon w={5} h={9}><path d="M0 0V9L5 4.500Z" fill="#3e5378" /></Icon>
        </button>
        <span className="w-[5px] border border-[#6f93c4] bg-white" />
      </div>
      <div className="w-4 bg-[#7b9bcb]" />
    </div>
  );
}

function StatusBar() {
  return (
    <div className="flex h-[22px] items-center border-t border-[#567db1] bg-linear-to-b from-[#dcebfd] via-[#aecbf1] via-40% to-[#d3e5fb] text-[11px] text-[#15428b]">
      <span className="flex h-full w-[53px] items-center border-r border-[#8db2e3] pl-[7px]">Готово</span>
      <div className="ml-auto flex h-full items-center border-l border-[#8db2e3] bg-linear-to-b from-[#a9c8f2] to-[#86abe0] pl-[5px] pr-[5px]">
        <div className="flex h-[18px] w-[56px] divide-x divide-[#9dbbe3] overflow-hidden rounded-[2px] border border-[#7399cd] bg-[#c5daf5]">
          <button aria-label="Обычный" className="flex flex-1 items-center justify-center bg-[#fbd58a]">
            <Icon w={13} h={11}>
              <path d="M0.500 0.500H12.500V10.500H0.500ZM0 3.500H13M0 7H13M4.500 0V11M8.500 0V11" fill="#fff" stroke="#6b6b6b" />
            </Icon>
          </button>
          <button aria-label="Разметка страницы" className="flex flex-1 items-center justify-center">
            <Icon w={12} h={11}>
              <path d="M0.500 0.500H11.500V10.500H0.500Z" fill="#8c8c8c" stroke="#6b6b6b" />
              <path d="M3 2H9V9H3Z" fill="#fff" />
              <path d="M4 4H8M4 6H8" stroke="#6b6b6b" />
            </Icon>
          </button>
          <button aria-label="Страничный режим" className="flex flex-1 items-center justify-center">
            <Icon w={12} h={11}>
              <path d="M0.500 0.500H11.500V10.500H0.500Z" fill="#8c8c8c" stroke="#6b6b6b" />
              <path d="M1 1H4V7H1ZM5 1H8V7H5Z" fill="#fff" />
            </Icon>
          </button>
        </div>
        <span className="w-[45px] text-center">100%</span>
        <button aria-label="Уменьшить">
          <Icon>
            <circle cx="8" cy="8" r="7" fill="#eef4fc" stroke="#4f6d9b" />
            <path d="M4.500 8H11.500" stroke="#44546d" strokeWidth="2" />
          </Icon>
        </button>
        <input
          type="range"
          aria-label="Масштаб"
          defaultValue={50}
          className="h-4 w-[102px] appearance-none bg-linear-to-b from-transparent from-50% via-[#4f74a8] via-50% to-transparent to-56% [&::-webkit-slider-thumb]:h-3 [&::-webkit-slider-thumb]:w-2 [&::-webkit-slider-thumb]:appearance-none [&::-webkit-slider-thumb]:rounded-b-full [&::-webkit-slider-thumb]:border [&::-webkit-slider-thumb]:border-[#4f6d9b] [&::-webkit-slider-thumb]:bg-[#e6effb]"
        />
        <button aria-label="Увеличить">
          <Icon>
            <circle cx="8" cy="8" r="7" fill="#eef4fc" stroke="#4f6d9b" />
            <path d="M4.500 8H11.500M8 4.500V11.500" stroke="#44546d" strokeWidth="2" />
          </Icon>
        </button>
      </div>
    </div>
  );
}

function IconMail() {
  return (
    <Icon>
      <path d="M1 6L8 12L15 6V15H1Z" fill="#fff" stroke="#a33" strokeWidth="0.800" />
      <circle cx="8.500" cy="5" r="5" fill="#f6e51e" />
      <path d="M5 3H12V8H6L4 10Z" fill="#fdf58a" stroke="#a59a10" strokeWidth="0.500" />
      <path d="M1 15L6 11M15 15L10 11" stroke="#b33" />
    </Icon>
  );
}

function IconRar() {
  return (
    <Icon>
      <path d="M1 1H13L15 3V5H3Z" fill="#a83c8f" />
      <path d="M1 6H13L15 8V10H3Z" fill="#3657b8" />
      <path d="M1 11H13L15 13V15H3Z" fill="#3b9a3f" />
      <path d="M3 4.500H15M3 9.500H15M3 14.500H15" stroke="#eee" />
      <path d="M6 0.500H8V15.500H6Z" fill="#b58a3c" />
    </Icon>
  );
}

function IconFolder() {
  return (
    <Icon>
      <path d="M1 14V3H6L7.500 4.500H13.500V14Z" fill="#e6b93c" />
      <path d="M1 14L3 6.500H15.500L13.500 14Z" fill="#ffe37a" stroke="#c2932a" strokeWidth="0.700" />
    </Icon>
  );
}

function IconDoc({ excel = false }: { excel?: boolean }) {
  const tone = excel ? '#2e8b45' : '#2b5fc0';
  return (
    <Icon>
      <path d="M6.500 2.500H13L15.500 5V15.500H6.500Z" fill="#e9f0fb" stroke="#7794c4" />
      <path d="M9 7H14M9 9H14M9 11H14M9 13H14" stroke={tone} />
      <path d="M0.500 1.500H10.500V11.500H0.500Z" fill={excel ? '#d7f0dc' : '#dbe7fb'} stroke={tone} />
      {excel ? (
        <path d="M3 4L8 9.500M8 4L3 9.500" stroke={tone} strokeWidth="2" />
      ) : (
        <path d="M2 4L4 9.500L5.500 5L7 9.500L9 4" stroke={tone} strokeWidth="1.500" />
      )}
    </Icon>
  );
}

function IconBolt() {
  return (
    <Icon>
      <path d="M13.500 1L3 6.500L5.500 9L2 15L13.500 9L10.500 6.500Z" fill="#f2a93b" stroke="#fff0cf" strokeWidth="0.800" />
      <path d="M12 3L6 7L10 8L5 12" stroke="#8a4a10" strokeWidth="0.800" />
    </Icon>
  );
}

const TASKS = [
  { title: 'Mail.Ru Аген...', icon: <IconMail /> },
  { title: 'ПРАКТИКА.r...', icon: <IconRar /> },
  { title: 'dzaurov92_9...', icon: <IconFolder /> },
  { title: 'Документ Mi...', icon: <IconDoc /> },
  { title: '7 вариант', icon: <IconDoc excel />, active: true },
  { title: 'Методы чис...', icon: <IconDoc /> },
  { title: 'Метод наим...', icon: <IconDoc /> },
];

function QuickLaunch() {
  return (
    <div className="flex w-[168px] items-center gap-[7px] text-white">
      <button aria-label="Firefox">
        <Icon>
          <circle cx="8" cy="8" r="7" fill="#2b62b8" />
          <path d="M8 15.500A7.500 7.500 0 0 1 1 4L3 5.500Q4 3 7 3L5.500 6L9 8Q8 10 5 10Q8 13 11.500 10.500Q14 8 12 2.500Q18 8 14 13Q11.500 15.500 8 15.500Z" fill="#f0802a" />
          <path d="M1 4L3 5.500L3 10Q5 14 9 14Q4 16.500 1.500 12Z" fill="#f8b43a" />
        </Icon>
      </button>
      <button aria-label="Mail.Ru">
        <Icon>
          <circle cx="8" cy="8" r="3" stroke="#f59331" strokeWidth="1.800" />
          <path d="M11 5V9.500Q12 11.500 13.500 10Q16 4 10.500 1.500Q4 0 1.500 6Q1 12.500 6.500 14.500Q9.500 15 12 13.500" stroke="#f59331" strokeWidth="1.600" />
        </Icon>
      </button>
      <button aria-label="Winamp"><IconBolt /></button>
      <button aria-label="Opera">
        <Icon><ellipse cx="8" cy="8" rx="5" ry="5.700" stroke="#dd1a1a" strokeWidth="3.600" /></Icon>
      </button>
      <button aria-label="Outlook">
        <Icon>
          <path d="M2 2.500H12L13.500 5V15H2Z" fill="#e7f1fc" stroke="#3f8bd0" />
          <path d="M11 5.500Q6 3.500 5 8Q5 12.500 10 11.500M5 8.500H9" stroke="#2a78c8" strokeWidth="1.800" />
          <path d="M11 3L15 5.500L11 8Z" fill="#e07b2a" />
        </Icon>
      </button>
      <button aria-label="Приложение">
        <Icon>
          <path d="M0 0H7V7H0Z" fill="#4bd02b" />
          <path d="M9 0H16V7H9Z" fill="#efe636" />
          <path d="M0 9H7V16H0Z" fill="#38c8ee" />
          <path d="M9 9H16V16H9Z" fill="#e35ad8" />
          <g fill="#1b2440">
            <circle cx="8" cy="3.500" r="2" />
            <circle cx="8" cy="12.500" r="2" />
            <circle cx="3.500" cy="8" r="2" />
            <circle cx="12.500" cy="8" r="2" />
          </g>
          <path d="M4.500 4.500L11.500 11.500M11.500 4.500L4.500 11.500" stroke="#fff" strokeWidth="1.500" />
        </Icon>
      </button>
    </div>
  );
}

function Tray() {
  return (
    <div className="flex items-center gap-0.5 pr-4 text-white">
      <Icon>
        <path d="M1 5L5 1L12 3L13 8L8 12L2 9Z" fill="#f7d98c" stroke="#b4822a" />
        <path d="M7 7L14 15M14 7L7 15" stroke="#e03520" strokeWidth="2.500" />
      </Icon>
      <Icon>
        <circle cx="8" cy="8" r="7.500" fill="#16b52a" />
        <circle cx="8" cy="8" r="2.200" stroke="#fff" strokeWidth="1.300" />
        <path d="M10.300 6V9.500Q12 10.500 12.500 8Q12 3.500 8 3.500T3.500 8T8 12.500H10" stroke="#fff" strokeWidth="1.200" />
      </Icon>
      <Icon>
        <path d="M8 2.500V13.500M2.500 8H13.500M4 4L12 12M12 4L4 12" stroke="#3ecb3a" strokeWidth="2.400" strokeLinecap="round" />
        <circle cx="8" cy="8" r="2" fill="#f4f266" />
      </Icon>
      <Icon>
        <path d="M1 1H14V15H1Z" fill="#fff" />
        <path d="M1 1H5V7L11 1H15L4 14H1Z" fill="#e3151a" />
        <path d="M9 7L13 13M13 9V13H9" stroke="#111" strokeWidth="1.400" />
      </Icon>
      <Icon>
        <path d="M6.500 1.500H14.500V8.500H6.500Z" fill="#5fb0f5" stroke="#cfe2f5" />
        <path d="M1.500 6.500H9.500V12.500H1.500Z" fill="#3b86dc" stroke="#cfe2f5" />
        <path d="M3 14.500H9M11 10.500H14" stroke="#cfe2f5" strokeWidth="1.500" />
      </Icon>
      <IconBolt />
      <Icon w={20}>
        <circle cx="7" cy="6" r="5.500" fill="#6c6c70" stroke="#b9b9bd" />
        <circle cx="8" cy="6" r="2.300" fill="#2b2b2e" />
        <path d="M12 14Q15 12 15 8M15 15Q18 12 17.500 10" stroke="#7b8fb8" />
      </Icon>
      <time className="pl-1.5 text-[11px]">3:33</time>
    </div>
  );
}

function Taskbar() {
  return (
    <footer className="flex h-[30px] items-center overflow-hidden border-t border-[#8c8c8c] bg-linear-to-b from-[#6a6a6a] via-[#2a2a2a] via-45% to-black to-50%">
      <button aria-label="Пуск" className="ml-[9px] mr-[21px] h-[30px] w-9 shrink-0 overflow-hidden">
        <svg width="36" height="36" viewBox="0 0 36 36" aria-hidden="true">
          <defs>
            <radialGradient id="start" cx="0.5" cy="0.9" r="0.8">
              <stop offset="0" stopColor="#7be4f4" />
              <stop offset="0.5" stopColor="#2279a8" />
              <stop offset="1" stopColor="#1a3f63" />
            </radialGradient>
          </defs>
          <circle cx="18" cy="17" r="17" fill="url(#start)" stroke="#0c1c2c" />
          <path d="M3 14A15 15 0 0 1 33 14Q18 18 3 14Z" fill="#cfe7f4" opacity="0.350" />
          <g fill="#e4f2fa">
            <path d="M13 11Q16 10 18 12L17 16.500Q14.500 15 12 16Z" />
            <path d="M19 12.500Q22 14 25.500 12L24 17Q21 18.500 18 17Z" />
            <path d="M11.500 17.500Q14.500 16.500 16.500 18L15.500 23Q13 21 10 22.500Z" />
            <path d="M17.500 18.500Q20.500 20 24 18.500L22.500 23.500Q19.500 25 16.500 23.500Z" />
          </g>
        </svg>
      </button>
      <QuickLaunch />
      <div className="flex gap-[3px]">
        {TASKS.map((task) => (
          <button
            key={task.title}
            className={clsx(
              'flex h-[26px] w-[115px] items-center gap-[3px] whitespace-nowrap rounded-[3px] border border-[#5c5c5c] pl-2 text-[11px] text-white',
              task.active ? 'bg-linear-to-b from-[#1c1c1c] to-[#3c3c3c]' : 'bg-linear-to-b from-[#4a4a4a] via-[#1d1d1d] via-45% to-black to-50%'
            )}
          >
            {task.icon}
            {task.title}
          </button>
        ))}
      </div>
      <span className="ml-3.5 h-4 w-[13px] shrink-0 overflow-hidden bg-[#0a9cf5] text-[11px] leading-4 text-white">RU</span>
      <div className="ml-auto">
        <Tray />
      </div>
    </footer>
  );
}

function App() {
  return (
    <div className="flex h-screen min-h-[600px] flex-col overflow-hidden bg-[#b0cbee] font-['Open_Sans','Liberation_Sans',sans-serif]">
      <TitleBar />
      <TabRow />
      <Ribbon />
      <FormulaBar />
      <div className="h-[3px] shrink-0 bg-[#d6e5f5]" />
      <main className="flex min-h-0 flex-1 border-t border-[#5f8ab8]">
        <div className="relative min-w-0 flex-1 overflow-hidden bg-white">
          <Sheet />
          <Chart />
        </div>
        <VerticalScroll />
      </main>
      <SheetTabs />
      <StatusBar />
      <Taskbar />
    </div>
  );
}

export default App;
